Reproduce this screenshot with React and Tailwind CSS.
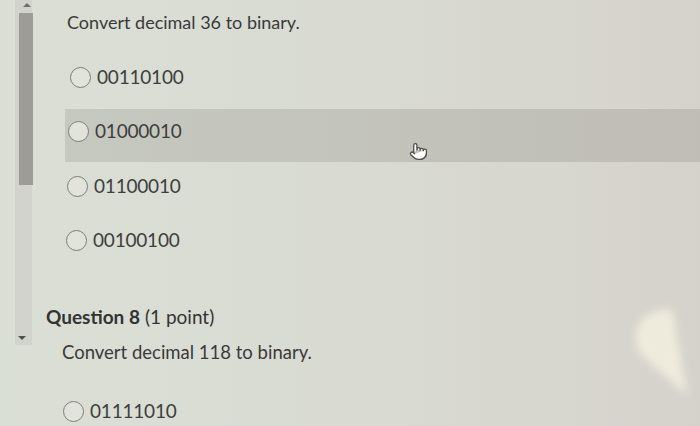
import React from 'react';
import { Pointer } from 'lucide-react';

const Radio = () => (
  <span className="inline-block w-[21px] h-[21px] rounded-full border-[1.5px] border-[#7c7d79] bg-[#e2e4dc] shrink-0" />
);

const Option = ({ label, className = '', radioLeft = 69 }) => (
  <div className={`flex items-center shrink-0 ${className}`}>
    <div className="flex items-center gap-[6px]" style={{ paddingLeft: radioLeft }}>
      <Radio />
      <span className="text-[19px] text-[#3e3e3e] tracking-[-0.2px]">{label}</span>
    </div>
  </div>
);

const App = () => {
  return (
    <div
      className="relative w-[700px] h-[426px] overflow-hidden bg-gradient-to-r from-[#dadfd5] via-[#d9dbd3] to-[#d5d2cc] flex"
      style={{ fontFamily: 'Lato, "Open Sans", sans-serif' }}
    >
      {/* scrollbar */}
      <div className="w-[40px] shrink-0 relative">
        <div className="absolute left-[15px] top-0 w-[17px] h-[345px] bg-[#d3d3cd]" />
        <div className="absolute left-[23px] top-[3px] w-0 h-0 border-l-[4px] border-r-[4px] border-b-[4px] border-l-transparent border-r-transparent border-b-[#6e6e6a]" />
        <div className="absolute left-[19px] top-[13px] w-[14px] h-[172px] bg-[#9d9c97]" />
        <div className="absolute left-[18px] top-[336px] w-0 h-0 border-l-[4px] border-r-[4px] border-t-[4px] border-l-transparent border-r-transparent border-t-[#4e4e4b]" />
      </div>

      <div className="flex-1 -ml-[40px] pt-[5px]">
        {/* question 7 */}
        <div className="h-[34px] flex items-center pl-[67px] text-[18px] text-[#3a3a3a]">
          Convert decimal 36 to binary.
        </div>
        <Option label="00110100" className="h-[70px] pt-[6px]" radioLeft={70} />
        <div className="ml-[65px] h-[53px] bg-gradient-to-r from-[#c6c9bf] to-[#bfbdb6] flex items-center pb-[8px] relative">
          <Option label="01000010" radioLeft={3} />
          <Pointer
            className="absolute left-[344px] top-[33px]"
            size={19}
            strokeWidth={1.6}
            fill="#ffffff"
            color="#4a4a4a"
          />
        </div>
        <Option label="01100010" className="h-[48px]" radioLeft={67} />
        <Option label="00100100" className="h-[60px]" radioLeft={66} />

        {/* question 8 */}
        <div className="mt-[31px] h-[32px] flex items-center pl-[46px] text-[19px] text-[#333333]">
          <span className="font-bold">Question 8</span>
          <span className="ml-[5px]">(1 point)</span>
        </div>
        <div className="mt-[4px] h-[32px] flex items-center pl-[62px] text-[18.5px] text-[#3a3a3a]">
          Convert decimal 118 to binary.
        </div>
        <Option label="01111010" className="mt-[21px] h-[42px]" radioLeft={63} />
      </div>

      {/* glare on the screen */}
      <svg className="absolute left-[610px] top-[290px]" width="90" height="136" viewBox="0 0 90 136">
        <defs>
          <filter id="soft" x="-30%" y="-30%" width="160%" height="160%">
            <feGaussianBlur stdDeviation="4" />
          </filter>
        </defs>
        <path
          d="M32 30 C40 22 55 18 62 20 C66 40 70 70 78 106 C60 90 42 75 30 62 C24 52 24 40 32 30 Z"
          fill="#f4f0df"
          opacity="0.85"
          filter="url(#soft)"
        />
      </svg>
    </div>
  );
};

export default App;
